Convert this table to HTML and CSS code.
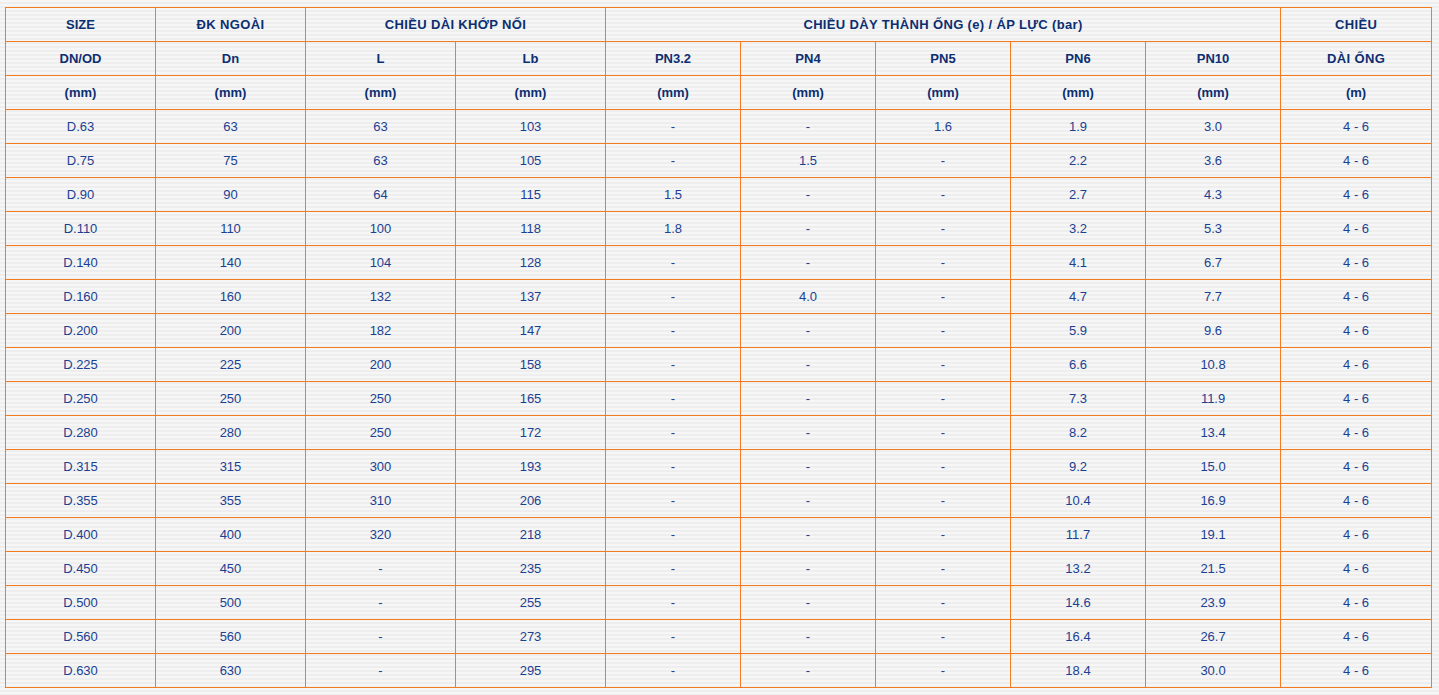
FILE: index.html
```html
<!DOCTYPE html>
<html lang="vi">
<head>
<meta charset="utf-8">
<title>Bảng quy cách ống</title>
<link rel="stylesheet" href="styles.css">
</head>
<body>
<div class="wrap">
<table class="spec">
<colgroup>
<col class="c150"><col class="c150"><col class="c150"><col class="c150">
<col class="c135"><col class="c135"><col class="c135"><col class="c135"><col class="c135">
<col class="c151">
</colgroup>
<thead>
<tr><th>SIZE</th><th class="wide">ĐK NGOÀI</th><th colspan="2" class="wide">CHIỀU DÀI KHỚP NỐI</th><th colspan="5" class="wide">CHIỀU DÀY THÀNH ỐNG (e) / ÁP LỰC (bar)</th><th class="wide">CHIỀU</th></tr>
<tr><th>DN/OD</th><th>Dn</th><th>L</th><th>Lb</th><th>PN3.2</th><th>PN4</th><th>PN5</th><th>PN6</th><th>PN10</th><th class="wide">DÀI ỐNG</th></tr>
<tr><th>(mm)</th><th>(mm)</th><th>(mm)</th><th>(mm)</th><th>(mm)</th><th>(mm)</th><th>(mm)</th><th>(mm)</th><th>(mm)</th><th>(m)</th></tr>
</thead>
<tbody>
<tr><td>D.63</td><td>63</td><td>63</td><td>103</td><td>-</td><td>-</td><td>1.6</td><td>1.9</td><td>3.0</td><td>4 - 6</td></tr>
<tr><td>D.75</td><td>75</td><td>63</td><td>105</td><td>-</td><td>1.5</td><td>-</td><td>2.2</td><td>3.6</td><td>4 - 6</td></tr>
<tr><td>D.90</td><td>90</td><td>64</td><td>115</td><td>1.5</td><td>-</td><td>-</td><td>2.7</td><td>4.3</td><td>4 - 6</td></tr>
<tr><td>D.110</td><td>110</td><td>100</td><td>118</td><td>1.8</td><td>-</td><td>-</td><td>3.2</td><td>5.3</td><td>4 - 6</td></tr>
<tr><td>D.140</td><td>140</td><td>104</td><td>128</td><td>-</td><td>-</td><td>-</td><td>4.1</td><td>6.7</td><td>4 - 6</td></tr>
<tr><td>D.160</td><td>160</td><td>132</td><td>137</td><td>-</td><td>4.0</td><td>-</td><td>4.7</td><td>7.7</td><td>4 - 6</td></tr>
<tr><td>D.200</td><td>200</td><td>182</td><td>147</td><td>-</td><td>-</td><td>-</td><td>5.9</td><td>9.6</td><td>4 - 6</td></tr>
<tr><td>D.225</td><td>225</td><td>200</td><td>158</td><td>-</td><td>-</td><td>-</td><td>6.6</td><td>10.8</td><td>4 - 6</td></tr>
<tr><td>D.250</td><td>250</td><td>250</td><td>165</td><td>-</td><td>-</td><td>-</td><td>7.3</td><td>11.9</td><td>4 - 6</td></tr>
<tr><td>D.280</td><td>280</td><td>250</td><td>172</td><td>-</td><td>-</td><td>-</td><td>8.2</td><td>13.4</td><td>4 - 6</td></tr>
<tr><td>D.315</td><td>315</td><td>300</td><td>193</td><td>-</td><td>-</td><td>-</td><td>9.2</td><td>15.0</td><td>4 - 6</td></tr>
<tr><td>D.355</td><td>355</td><td>310</td><td>206</td><td>-</td><td>-</td><td>-</td><td>10.4</td><td>16.9</td><td>4 - 6</td></tr>
<tr><td>D.400</td><td>400</td><td>320</td><td>218</td><td>-</td><td>-</td><td>-</td><td>11.7</td><td>19.1</td><td>4 - 6</td></tr>
<tr><td>D.450</td><td>450</td><td>-</td><td>235</td><td>-</td><td>-</td><td>-</td><td>13.2</td><td>21.5</td><td>4 - 6</td></tr>
<tr><td>D.500</td><td>500</td><td>-</td><td>255</td><td>-</td><td>-</td><td>-</td><td>14.6</td><td>23.9</td><td>4 - 6</td></tr>
<tr><td>D.560</td><td>560</td><td>-</td><td>273</td><td>-</td><td>-</td><td>-</td><td>16.4</td><td>26.7</td><td>4 - 6</td></tr>
<tr><td>D.630</td><td>630</td><td>-</td><td>295</td><td>-</td><td>-</td><td>-</td><td>18.4</td><td>30.0</td><td>4 - 6</td></tr>
</tbody>
</table>
</div>
</body>
</html>
```
FILE: styles.css
```css
html, body {
  margin: 0;
  padding: 0;
}
body {
  font-family: "Liberation Sans", Arial, sans-serif;
  background: repeating-linear-gradient(to bottom, #f6f6f6 0, #f6f6f6 2px, #eeeeee 2px, #eeeeee 4px);
  min-height: 695px;
}
.wrap {
  padding: 7px 0 0 5px;
}
.spec {
  border-collapse: separate;
  border-spacing: 0;
  table-layout: fixed;
  width: 1427px;
  border-top: 1px solid #f47b20;
  border-left: 1px solid #f47b20;
}
.c150 { width: 150px; }
.c135 { width: 135px; }
.c151 { width: 151px; }
.spec th,
.spec td {
  box-sizing: border-box;
  border-right: 1px solid #f47b20;
  border-bottom: 1px solid #f47b20;
  padding: 0;
  text-align: center;
  vertical-align: middle;
  font-size: 13px;
  line-height: 33px;
  white-space: nowrap;
}
.spec th {
  font-weight: bold;
  color: #0c2f72;
}
.spec th.wide {
  letter-spacing: 0.35px;
}
.spec td {
  font-weight: normal;
  color: #1b3f92;
}
```
